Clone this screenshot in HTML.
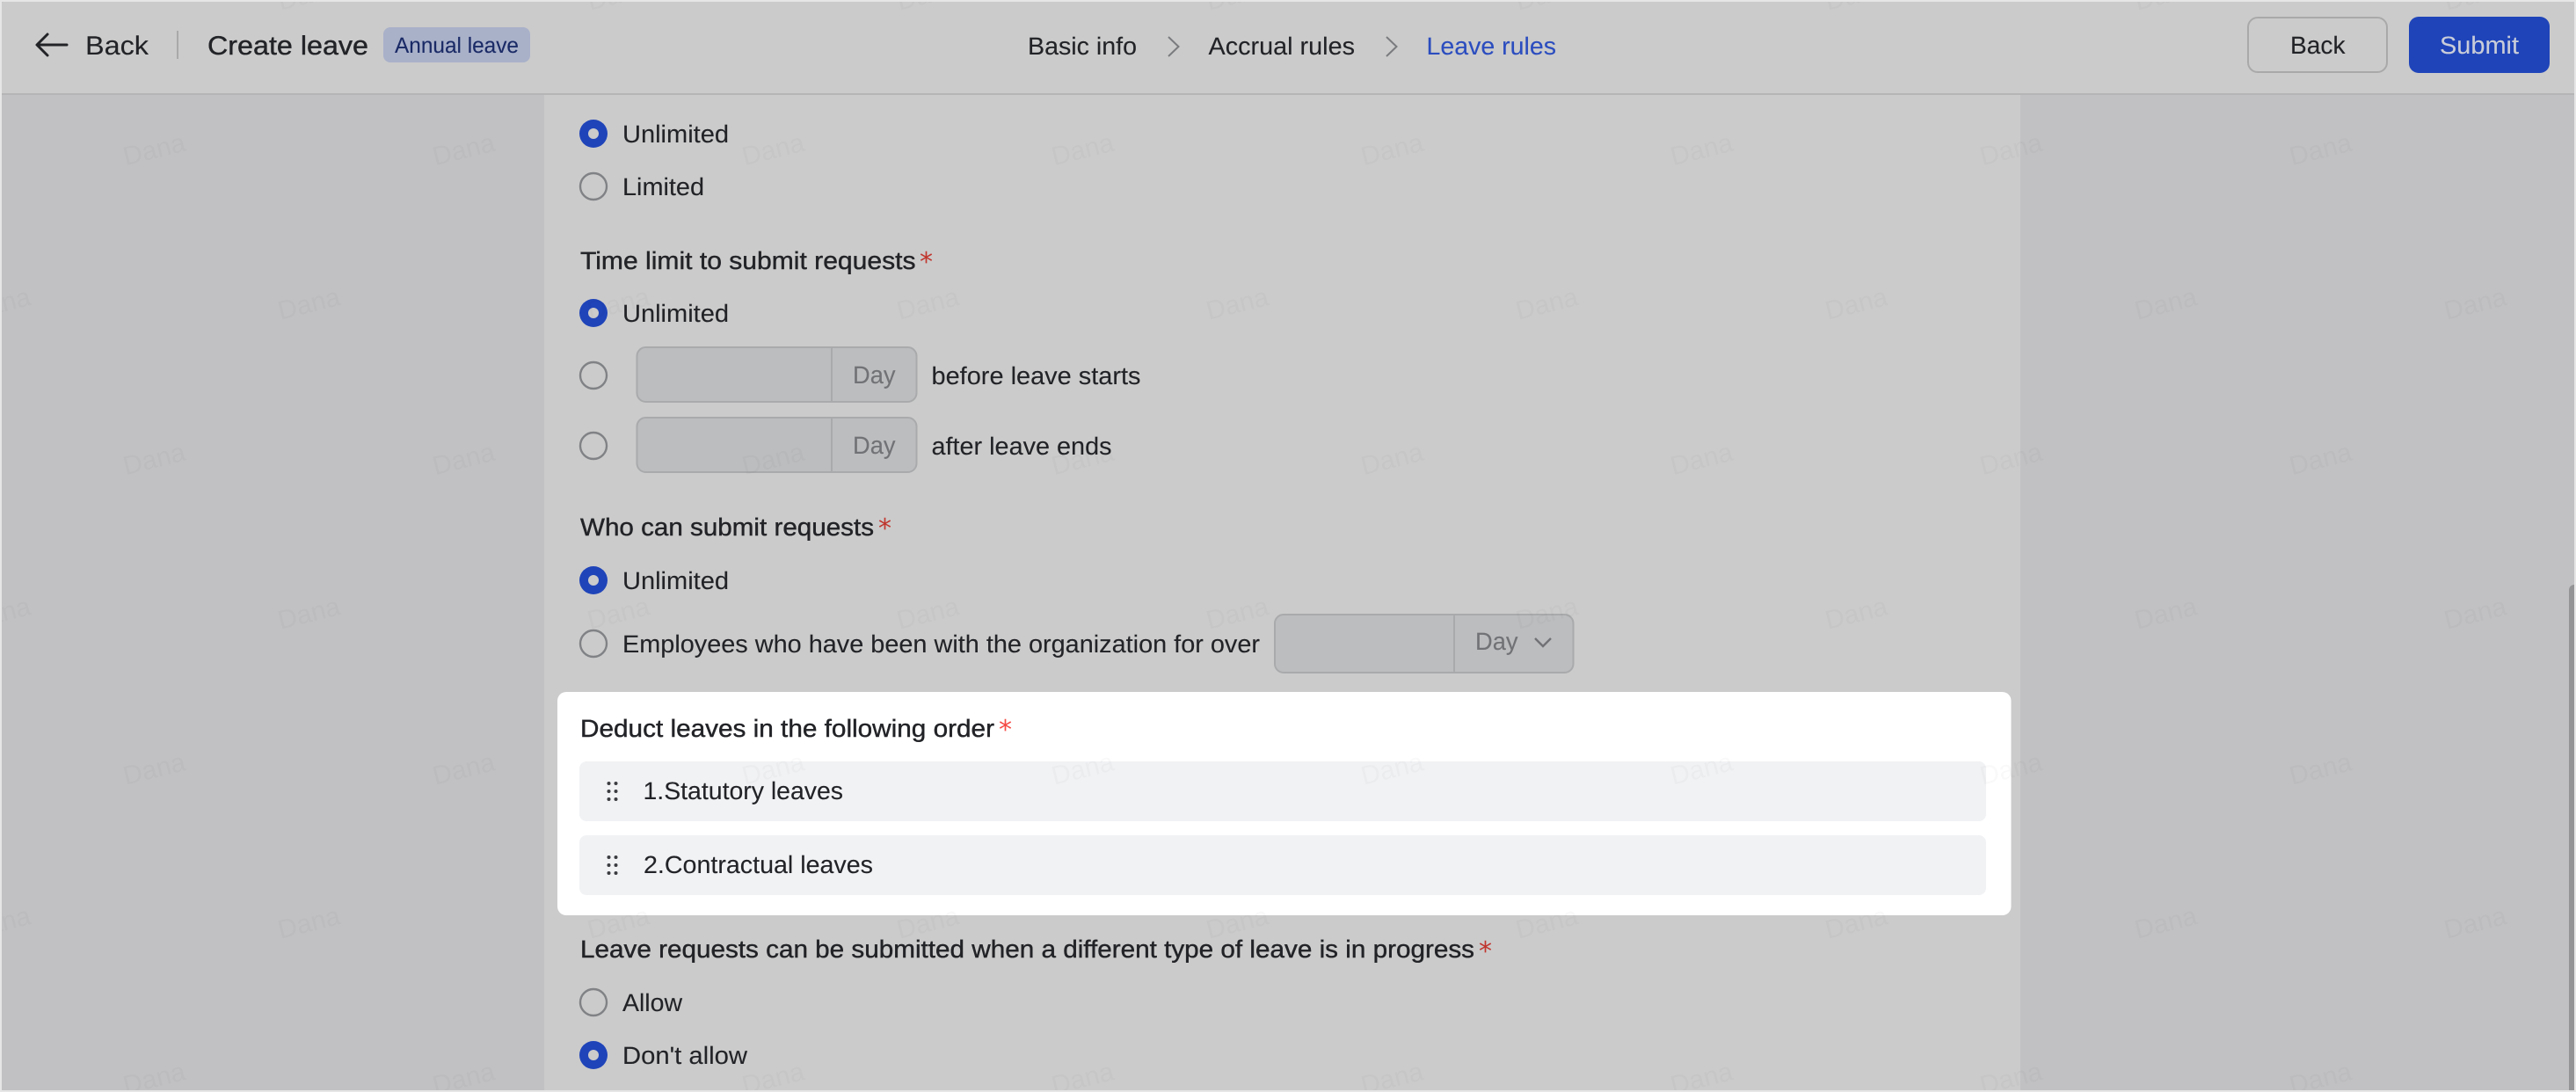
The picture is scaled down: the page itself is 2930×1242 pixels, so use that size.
<!DOCTYPE html>
<html lang="en">
<head>
<meta charset="utf-8">
<title>Create leave</title>
<style>
html,body{margin:0;padding:0;width:2930px;height:1242px;overflow:hidden;background:#e6e6e6}
svg{display:block;position:absolute;left:0;top:0}
text{font-family:"Liberation Sans",Arial,sans-serif;font-size:28px;color:#222327;fill:currentColor;stroke:currentColor;stroke-width:.1px;text-rendering:geometricPrecision}
text.m{stroke-width:.4px}
text.s{font-family:"DejaVu Sans",sans-serif;font-size:30px;color:#c0352e;stroke:none}
text.g{color:#717275}
.w text{font-size:30px;fill:#000;fill-opacity:.024;stroke:none;text-anchor:middle;dominant-baseline:central}
.r{fill:none;stroke:#808285;stroke-width:2.4}
.c{fill:#1f44b9}
.d{fill:#cbcbcb}
.i{fill:#bcbdbf;stroke:#a9aaac;stroke-width:2}
.h{fill:#3b3c40}
</style>
</head>
<body>
<svg width="2930" height="1242" viewBox="0 0 2930 1242" xmlns="http://www.w3.org/2000/svg">
<!-- backgrounds -->
<rect x="2" y="108" width="2926" height="1132" fill="#c1c1c3"/>
<rect x="619" y="108" width="1679" height="1132" fill="#cbcbcb"/>
<rect x="2" y="2" width="2926" height="104" fill="#cbcbcb"/>
<rect x="2" y="106" width="2926" height="2" fill="#b5b5b7"/>
<path d="M2922 1240V671a6 6 0 0 1 6-6V1240z" fill="#949496"/>

<!-- header -->
<path d="M76 51H43M54 39L42 51L54 63" fill="none" stroke="#222327" stroke-width="3" stroke-linecap="round" stroke-linejoin="round"/>
<text x="97" y="62" style="font-size:30px" textLength="72" lengthAdjust="spacingAndGlyphs">Back</text>
<rect x="201" y="35" width="2" height="32" fill="#a9a9a9"/>
<text x="236" y="62" class="m" style="font-size:30px" textLength="183" lengthAdjust="spacingAndGlyphs">Create leave</text>
<rect x="436" y="31" width="167" height="40" rx="8" fill="#a9b1c9"/>
<text x="449" y="60" style="font-size:25px;color:#1a2a66" textLength="141" lengthAdjust="spacingAndGlyphs">Annual leave</text>

<text x="1169" y="62" textLength="124" lengthAdjust="spacingAndGlyphs">Basic info</text>
<path d="M1329 42L1340.500 53L1329 64" fill="none" stroke="#7a7b7e" stroke-width="2"/>
<text x="1374.500" y="62" textLength="166.500" lengthAdjust="spacingAndGlyphs">Accrual rules</text>
<path d="M1577 42L1588.500 53L1577 64" fill="none" stroke="#7a7b7e" stroke-width="2"/>
<text x="1622.500" y="62" textLength="147.500" lengthAdjust="spacingAndGlyphs" style="color:#2b4dbf">Leave rules</text>

<rect x="2557" y="20" width="158" height="62" rx="11" fill="none" stroke="#a9a9a9" stroke-width="2"/>
<text x="2605" y="61" textLength="62.500" lengthAdjust="spacingAndGlyphs">Back</text>
<rect x="2740" y="19" width="160" height="64" rx="11" class="c"/>
<text x="2775" y="61" textLength="90" lengthAdjust="spacingAndGlyphs" style="color:#c9cdd9">Submit</text>

<!-- group 1 -->
<circle cx="675" cy="152" r="16" class="c"/><circle cx="675" cy="152" r="6" class="d"/>
<text x="708" y="162" textLength="121" lengthAdjust="spacingAndGlyphs">Unlimited</text>
<circle cx="675" cy="212" r="15" class="r"/>
<text x="708" y="222" textLength="93" lengthAdjust="spacingAndGlyphs">Limited</text>

<!-- group 2 -->
<text x="660" y="306" class="m" textLength="381.500" lengthAdjust="spacingAndGlyphs">Time limit to submit requests</text>
<text x="1046" y="308" class="s">*</text>
<circle cx="675" cy="356" r="16" class="c"/><circle cx="675" cy="356" r="6" class="d"/>
<text x="708" y="366" textLength="121" lengthAdjust="spacingAndGlyphs">Unlimited</text>
<circle cx="675" cy="427" r="15" class="r"/>
<rect x="724.500" y="395" width="318" height="62" rx="10" class="i"/>
<rect x="945" y="395" width="2" height="62" fill="#a9aaac"/>
<text x="970" y="436" class="g" textLength="48.500" lengthAdjust="spacingAndGlyphs">Day</text>
<text x="1059.500" y="437" textLength="238" lengthAdjust="spacingAndGlyphs">before leave starts</text>
<circle cx="675" cy="507" r="15" class="r"/>
<rect x="724.500" y="475" width="318" height="62" rx="10" class="i"/>
<rect x="945" y="475" width="2" height="62" fill="#a9aaac"/>
<text x="970" y="516" class="g" textLength="48.500" lengthAdjust="spacingAndGlyphs">Day</text>
<text x="1059.500" y="517" textLength="205" lengthAdjust="spacingAndGlyphs">after leave ends</text>

<!-- group 3 -->
<text x="660" y="609" class="m" textLength="334" lengthAdjust="spacingAndGlyphs">Who can submit requests</text>
<text x="999" y="611" class="s">*</text>
<circle cx="675" cy="660" r="16" class="c"/><circle cx="675" cy="660" r="6" class="d"/>
<text x="708" y="670" textLength="121" lengthAdjust="spacingAndGlyphs">Unlimited</text>
<circle cx="675" cy="732" r="15" class="r"/>
<text x="708" y="742" textLength="725" lengthAdjust="spacingAndGlyphs">Employees who have been with the organization for over</text>
<rect x="1450" y="699" width="339.500" height="66" rx="10" class="i"/>
<rect x="1653" y="699" width="2" height="66" fill="#a9aaac"/>
<text x="1678" y="739" class="g" textLength="48.500" lengthAdjust="spacingAndGlyphs">Day</text>
<path d="M1746 726L1755 735L1764 726" fill="none" stroke="#717275" stroke-width="2.400"/>

<!-- highlighted card -->
<rect x="634" y="787" width="1653.500" height="254" rx="10" fill="#fff"/>
<text x="660" y="838" class="m" textLength="471" lengthAdjust="spacingAndGlyphs">Deduct leaves in the following order</text>
<text x="1136" y="840" class="s" style="color:#f54a45">*</text>
<rect x="659" y="866" width="1600" height="68" rx="8" fill="#f1f2f4"/>
<rect x="659" y="950" width="1600" height="68" rx="8" fill="#f1f2f4"/>
<circle cx="692.500" cy="891" r="2" class="h"/><circle cx="700.500" cy="891" r="2" class="h"/>
<circle cx="692.500" cy="900" r="2" class="h"/><circle cx="700.500" cy="900" r="2" class="h"/>
<circle cx="692.500" cy="909" r="2" class="h"/><circle cx="700.500" cy="909" r="2" class="h"/>
<text x="731.500" y="909" textLength="227.500" lengthAdjust="spacingAndGlyphs">1.Statutory leaves</text>
<circle cx="692.500" cy="975" r="2" class="h"/><circle cx="700.500" cy="975" r="2" class="h"/>
<circle cx="692.500" cy="984" r="2" class="h"/><circle cx="700.500" cy="984" r="2" class="h"/>
<circle cx="692.500" cy="993" r="2" class="h"/><circle cx="700.500" cy="993" r="2" class="h"/>
<text x="732" y="993" textLength="261" lengthAdjust="spacingAndGlyphs">2.Contractual leaves</text>

<!-- group 5 -->
<text x="660" y="1089" class="m" textLength="1017" lengthAdjust="spacingAndGlyphs">Leave requests can be submitted when a different type of leave is in progress</text>
<text x="1682" y="1092" class="s">*</text>
<circle cx="675" cy="1140" r="15" class="r"/>
<text x="708" y="1150" textLength="68" lengthAdjust="spacingAndGlyphs">Allow</text>
<circle cx="675" cy="1200" r="16" class="c"/><circle cx="675" cy="1200" r="6" class="d"/>
<text x="708" y="1210" textLength="142" lengthAdjust="spacingAndGlyphs">Don't allow</text>

<!-- watermark -->
<g class="w">
<text transform="translate(-0.5 -6) rotate(-14)">Dana</text><text transform="translate(351.5 -6) rotate(-14)">Dana</text><text transform="translate(703.5 -6) rotate(-14)">Dana</text><text transform="translate(1055.5 -6) rotate(-14)">Dana</text><text transform="translate(1407.5 -6) rotate(-14)">Dana</text><text transform="translate(1759.5 -6) rotate(-14)">Dana</text><text transform="translate(2111.5 -6) rotate(-14)">Dana</text><text transform="translate(2463.5 -6) rotate(-14)">Dana</text><text transform="translate(2815.5 -6) rotate(-14)">Dana</text>
<text transform="translate(175.5 170.5) rotate(-14)">Dana</text><text transform="translate(527.5 170.5) rotate(-14)">Dana</text><text transform="translate(879.5 170.5) rotate(-14)">Dana</text><text transform="translate(1231.5 170.5) rotate(-14)">Dana</text><text transform="translate(1583.5 170.5) rotate(-14)">Dana</text><text transform="translate(1935.5 170.5) rotate(-14)">Dana</text><text transform="translate(2287.5 170.5) rotate(-14)">Dana</text><text transform="translate(2639.5 170.5) rotate(-14)">Dana</text>
<text transform="translate(-0.5 346) rotate(-14)">Dana</text><text transform="translate(351.5 346) rotate(-14)">Dana</text><text transform="translate(703.5 346) rotate(-14)">Dana</text><text transform="translate(1055.5 346) rotate(-14)">Dana</text><text transform="translate(1407.5 346) rotate(-14)">Dana</text><text transform="translate(1759.5 346) rotate(-14)">Dana</text><text transform="translate(2111.5 346) rotate(-14)">Dana</text><text transform="translate(2463.5 346) rotate(-14)">Dana</text><text transform="translate(2815.5 346) rotate(-14)">Dana</text>
<text transform="translate(175.5 522.5) rotate(-14)">Dana</text><text transform="translate(527.5 522.5) rotate(-14)">Dana</text><text transform="translate(879.5 522.5) rotate(-14)">Dana</text><text transform="translate(1231.5 522.5) rotate(-14)">Dana</text><text transform="translate(1583.5 522.5) rotate(-14)">Dana</text><text transform="translate(1935.5 522.5) rotate(-14)">Dana</text><text transform="translate(2287.5 522.5) rotate(-14)">Dana</text><text transform="translate(2639.5 522.5) rotate(-14)">Dana</text>
<text transform="translate(-0.5 698) rotate(-14)">Dana</text><text transform="translate(351.5 698) rotate(-14)">Dana</text><text transform="translate(703.5 698) rotate(-14)">Dana</text><text transform="translate(1055.5 698) rotate(-14)">Dana</text><text transform="translate(1407.5 698) rotate(-14)">Dana</text><text transform="translate(1759.5 698) rotate(-14)">Dana</text><text transform="translate(2111.5 698) rotate(-14)">Dana</text><text transform="translate(2463.5 698) rotate(-14)">Dana</text><text transform="translate(2815.5 698) rotate(-14)">Dana</text>
<text transform="translate(175.5 875) rotate(-14)">Dana</text><text transform="translate(527.5 875) rotate(-14)">Dana</text><text transform="translate(879.5 875) rotate(-14)">Dana</text><text transform="translate(1231.5 875) rotate(-14)">Dana</text><text transform="translate(1583.5 875) rotate(-14)">Dana</text><text transform="translate(1935.5 875) rotate(-14)">Dana</text><text transform="translate(2287.5 875) rotate(-14)">Dana</text><text transform="translate(2639.5 875) rotate(-14)">Dana</text>
<text transform="translate(-0.5 1050) rotate(-14)">Dana</text><text transform="translate(351.5 1050) rotate(-14)">Dana</text><text transform="translate(703.5 1050) rotate(-14)">Dana</text><text transform="translate(1055.5 1050) rotate(-14)">Dana</text><text transform="translate(1407.5 1050) rotate(-14)">Dana</text><text transform="translate(1759.5 1050) rotate(-14)">Dana</text><text transform="translate(2111.5 1050) rotate(-14)">Dana</text><text transform="translate(2463.5 1050) rotate(-14)">Dana</text><text transform="translate(2815.5 1050) rotate(-14)">Dana</text>
<text transform="translate(175.5 1227) rotate(-14)">Dana</text><text transform="translate(527.5 1227) rotate(-14)">Dana</text><text transform="translate(879.5 1227) rotate(-14)">Dana</text><text transform="translate(1231.5 1227) rotate(-14)">Dana</text><text transform="translate(1583.5 1227) rotate(-14)">Dana</text><text transform="translate(1935.5 1227) rotate(-14)">Dana</text><text transform="translate(2287.5 1227) rotate(-14)">Dana</text><text transform="translate(2639.5 1227) rotate(-14)">Dana</text>
</g>

<!-- outer light edge -->
<path d="M0 0H2930V1242H0zM2 2V1240H2928V2z" fill="#e6e6e6" fill-rule="evenodd"/>
</svg>
</body>
</html>
